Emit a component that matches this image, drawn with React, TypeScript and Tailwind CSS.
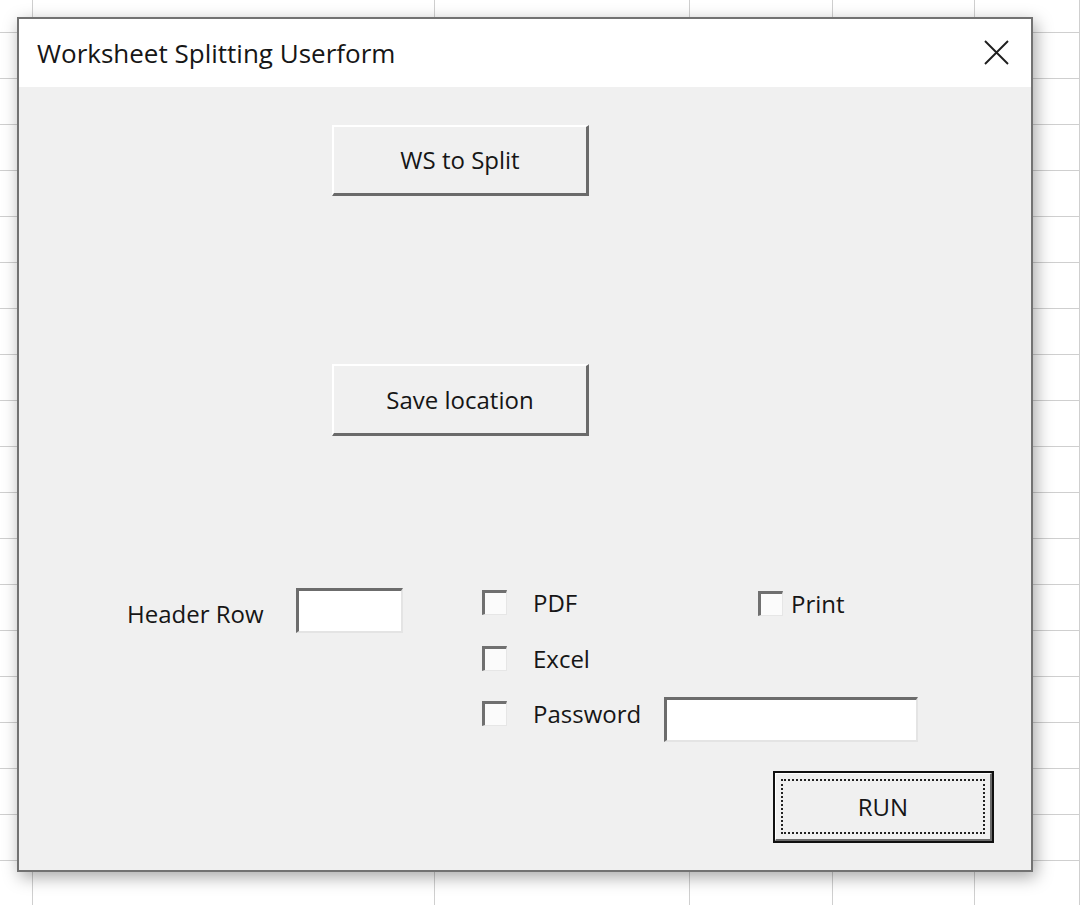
import React from "react";

function Raised({ children, className }: { children: React.ReactNode; className: string }) {
  return (
    <div
      className={
        "flex items-center justify-center bg-[#f0f0f0] border-t-2 border-l-2 border-b-[3px] border-r-[3px] border-t-white border-l-white border-b-[#6a6a6a] border-r-[#6a6a6a] text-[24px] leading-none " +
        className
      }
    >
      {children}
    </div>
  );
}

function Check() {
  return (
    <div className="w-[25px] h-[25px] shrink-0 bg-[#fbfbfb] border-t-[3px] border-l-[3px] border-b border-r border-t-[#707070] border-l-[#707070] border-b-[#e6e6e6] border-r-[#e6e6e6]" />
  );
}

function TextBox({ className }: { className: string }) {
  return (
    <div
      className={
        "shrink-0 bg-white border-t-[3px] border-l-[3px] border-b-2 border-r-2 border-t-[#6c6c6c] border-l-[#6c6c6c] border-b-[#e4e4e4] border-r-[#e4e4e4] " +
        className
      }
    />
  );
}

export default function App() {
  const cells = [];
  for (let r = 0; r < 20; r++) {
    for (let c = 0; c < 6; c++) {
      cells.push(<div key={r + "-" + c} className="border-r border-b border-[#cfcfcf]" />);
    }
  }
  return (
    <div className="relative w-[1080px] h-[905px] overflow-hidden bg-white font-['Open_Sans',sans-serif] text-[#161616]">
      <div className="grid grid-cols-[33px_402px_255px_143px_142px_1fr] grid-rows-[33px_repeat(19,46px)] w-[1080px]">
        {cells}
      </div>

      <div className="absolute left-[17px] top-[17px] w-[1016px] h-[855px] border-2 border-[#727272] bg-[#f0f0f0] shadow-[3px_5px_16px_rgba(0,0,0,0.35)] flex flex-col">
        {/* title bar */}
        <div className="h-[68px] shrink-0 bg-white flex items-center justify-between pl-[18px] pr-[22px]">
          <span className="text-[26px] leading-none">Worksheet Splitting Userform</span>
          <svg width="25" height="25" viewBox="0 0 25 25" className="mt-[-2px]">
            <path d="M1 1 L24 24 M24 1 L1 24" stroke="#1e1e1e" strokeWidth="1.9" fill="none" />
          </svg>
        </div>

        {/* content */}
        <div className="flex-1 flex flex-col">
          <Raised className="mt-[38px] ml-[313px] w-[257px] h-[71px]">WS to Split</Raised>
          <Raised className="mt-[168px] ml-[313px] w-[257px] h-[72px]">Save location</Raised>

          <div className="mt-[152px] pl-[108px] flex flex-col text-[24px] leading-none">
            {/* row 1 */}
            <div className="flex items-start">
              <div className="w-[355px] flex items-center">
                <span className="w-[169px] pt-[6px]">Header Row</span>
                <TextBox className="w-[107px] h-[45px]" />
              </div>
              <div className="w-[276px] mt-[2px] flex items-center">
                <Check />
                <span className="ml-[26px]">PDF</span>
              </div>
              <div className="mt-[3px] flex items-center">
                <Check />
                <span className="ml-[8px]">Print</span>
              </div>
            </div>
            {/* row 2 */}
            <div className="mt-[13px] ml-[355px] flex items-center">
              <Check />
              <span className="ml-[26px]">Excel</span>
            </div>
            {/* row 3 */}
            <div className="mt-[26px] ml-[355px] flex items-start">
              <div className="w-[182px] mt-[4px] flex items-center">
                <Check />
                <span className="ml-[26px]">Password</span>
              </div>
              <TextBox className="w-[254px] h-[45px]" />
            </div>
            {/* row 4 */}
            <div className="mt-[29px] ml-[646px] w-[221px] h-[72px] border-2 border-[#101010] flex">
              <div className="flex-1 flex p-[2px] bg-[#f0f0f0] border-t border-l border-b-2 border-r-2 border-t-white border-l-white border-b-[#6a6a6a] border-r-[#6a6a6a]">
                <div className="flex-1 m-[3px] border-2 border-dotted border-[#222] flex items-center justify-center">
                  RUN
                </div>
              </div>
            </div>
          </div>
        </div>
      </div>
    </div>
  );
}
